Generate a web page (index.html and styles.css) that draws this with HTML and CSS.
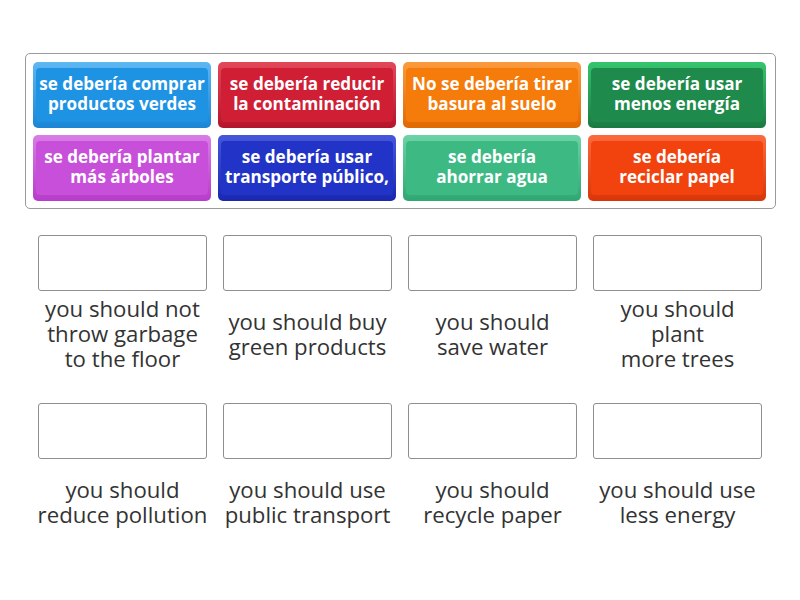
FILE: index.html
```html
<!DOCTYPE html>
<html>
<head>
<meta charset="utf-8">
<link rel="stylesheet" href="styles.css">
</head>
<body>
<div class="page">
  <div class="bank">
    <div class="tile blue"><span class="face">se debería comprar<br>productos verdes</span></div>
    <div class="tile red"><span class="face">se debería reducir<br>la contaminación</span></div>
    <div class="tile orange"><span class="face">No se debería tirar<br>basura al suelo</span></div>
    <div class="tile green"><span class="face">se debería usar<br>menos energía</span></div>
    <div class="tile magenta"><span class="face">se debería plantar<br>más árboles</span></div>
    <div class="tile navy"><span class="face">se debería usar<br>transporte público,</span></div>
    <div class="tile teal"><span class="face">se debería<br>ahorrar agua</span></div>
    <div class="tile vermilion"><span class="face">se debería<br>reciclar papel</span></div>
  </div>
  <div class="targets">
    <div class="cell"><div class="box"></div><div class="label">you should not<br>throw garbage<br>to the floor</div></div>
    <div class="cell"><div class="box"></div><div class="label">you should buy<br>green products</div></div>
    <div class="cell"><div class="box"></div><div class="label">you should<br>save water</div></div>
    <div class="cell"><div class="box"></div><div class="label">you should<br>plant<br>more trees</div></div>
    <div class="cell"><div class="box"></div><div class="label">you should<br>reduce pollution</div></div>
    <div class="cell"><div class="box"></div><div class="label">you should use<br>public transport</div></div>
    <div class="cell"><div class="box"></div><div class="label">you should<br>recycle paper</div></div>
    <div class="cell"><div class="box"></div><div class="label">you should use<br>less energy</div></div>
  </div>
</div>
</body>
</html>
```
FILE: styles.css
```css
html, body {
  margin: 0;
  padding: 0;
  background: #ffffff;
}
body {
  font-family: "Open Sans", "Liberation Sans", sans-serif;
}
.page {
  width: 800px;
  height: 600px;
  padding-top: 53px;
  box-sizing: border-box;
}
.bank {
  margin-left: 25px;
  width: 751px;
  height: 156px;
  box-sizing: border-box;
  border: 1px solid #9a9a9a;
  border-radius: 5px;
  padding: 8px 0 0 7px;
  display: grid;
  grid-template-columns: repeat(4, 178px);
  grid-template-rows: 66px 66px;
  column-gap: 7px;
  row-gap: 7px;
}
.tile {
  border-radius: 5px;
  padding: 6px 3px 6px 3px;
  display: flex;
}
.face {
  flex: 1;
  border-radius: 4px;
  display: flex;
  align-items: center;
  justify-content: center;
  text-align: center;
  color: #ffffff;
  font-weight: 700;
  font-size: 17.1px;
  line-height: 20px;
  padding: 0 0 2px 0;
  white-space: nowrap;
}
.blue { background: linear-gradient(#5db7f2, #1b86d6); }
.blue .face { background: #1f93e3; }
.red { background: linear-gradient(#e2475a, #b5152a); }
.red .face { background: #d01e35; }
.orange { background: linear-gradient(#fb9a3d, #e06a02); }
.orange .face { background: #f57b0b; }
.green { background: linear-gradient(#35c56e, #1a7a42); }
.green .face { background: #1e8a4b; }
.magenta { background: linear-gradient(#d97de6, #b73ccb); }
.magenta .face { background: #c84fd9; }
.navy { background: linear-gradient(#4657dc, #1a28b0); }
.navy .face { background: #2234c8; }
.teal { background: linear-gradient(#6dd3a6, #2fa772); }
.teal .face { background: #3dba84; }
.vermilion { background: linear-gradient(#fb6a3e, #d83608); }
.vermilion .face { background: #f2430f; }

.targets {
  margin-top: 26px;
  margin-left: 30px;
  display: grid;
  grid-template-columns: repeat(4, 185px);
  row-gap: 25px;
}
.cell {
  display: flex;
  flex-direction: column;
  align-items: center;
}
.box {
  width: 169px;
  height: 56px;
  box-sizing: border-box;
  border: 1px solid #8f8f8f;
  border-radius: 3px;
  background: #ffffff;
}
.label {
  height: 87px;
  width: 185px;
  box-sizing: border-box;
  padding-bottom: 2px;
  display: flex;
  align-items: center;
  justify-content: center;
  text-align: center;
  color: #333333;
  font-size: 22.2px;
  line-height: 25px;
  white-space: nowrap;
}
```
